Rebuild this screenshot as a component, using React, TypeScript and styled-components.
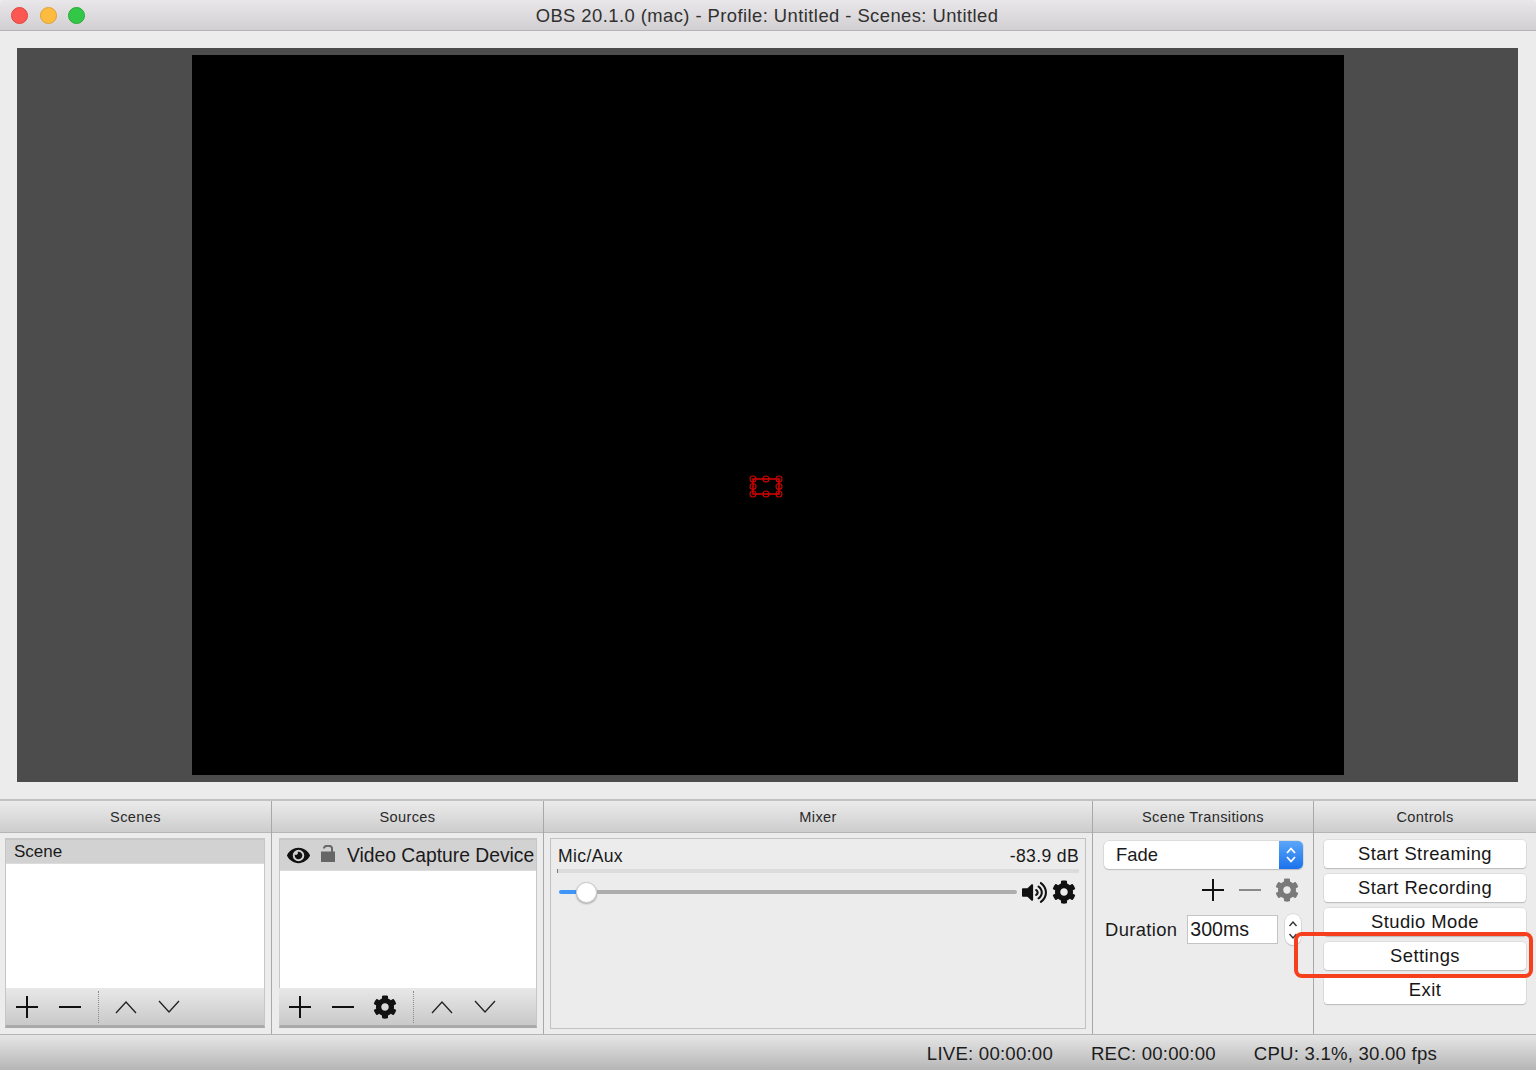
import React from 'react'
import styled, { createGlobalStyle } from 'styled-components'
import { FaCog, FaEye, FaVolumeUp } from 'react-icons/fa'

const GlobalStyle = createGlobalStyle`
  html, body {
    margin: 0;
    background: #ececec;
  }
  * {
    box-sizing: border-box;
  }
`

const Win = styled.div`
  position: relative;
  width: 1536px;
  height: 1070px;
  display: flex;
  flex-direction: column;
  overflow: hidden;
  background: #ececec;
  color: #1a1a1a;
  font-family: "Liberation Sans", Arial, sans-serif;
`

const TitleBar = styled.div`
  height: 31px;
  flex: none;
  display: flex;
  align-items: center;
  position: relative;
  padding-left: 11px;
  gap: 11.5px;
  background: linear-gradient(#e9e7e9, #d1cfd1);
  border-bottom: 1px solid #b4b4b4;
  border-radius: 5px 5px 0 0;
`

const Light = styled.span<{ $c: string; $b: string }>`
  width: 17px;
  height: 17px;
  border-radius: 50%;
  background: ${(p) => p.$c};
  border: 1px solid ${(p) => p.$b};
`

const Title = styled.div`
  position: absolute;
  left: 0;
  right: 2px;
  top: 4px;
  text-align: center;
  font-size: 18.4px;
  letter-spacing: 0.44px;
  line-height: 23px;
  color: #303030;
`

const Preview = styled.div`
  margin: 17px 18px 17px 17px;
  height: 734px;
  flex: none;
  padding: 7px 174px 7px 175px;
  background: #4c4c4c;
`

const Canvas = styled.div`
  height: 100%;
  display: flex;
  align-items: center;
  justify-content: center;
  background: #000;
`

const BoundsSvg = styled.svg`
  margin: 143px 4px 0 0;
`

const Dock = styled.div`
  flex: none;
  height: 235px;
  display: grid;
  grid-template-columns: 272px 272px 549px 221px 222px;
  border-top: 2px solid #c2c2c2;
`

const Panel = styled.section`
  display: flex;
  flex-direction: column;
  min-width: 0;
  border-right: 1px solid #a8a8a8;
  &:last-child {
    border-right: 0;
  }
`

const PanelHead = styled.div`
  height: 32px;
  flex: none;
  display: flex;
  align-items: center;
  justify-content: center;
  font-size: 14.6px;
  letter-spacing: 0.35px;
  color: #2a2a2a;
  background: linear-gradient(#ebebeb, #cdcdcd);
  border-bottom: 1px solid #b5b5b5;
`

const ListWrap = styled.div<{ $left: number }>`
  flex: 1;
  display: flex;
  padding: 5px 6px 6px ${(p) => p.$left}px;
`

const ListBox = styled.div`
  flex: 1;
  display: flex;
  flex-direction: column;
  border: 1px solid #c6c6c6;
  border-top-width: 2px;
  border-bottom-width: 3px;
  border-bottom-color: #a9a9a9;
  background: #fff;
`

const ListRow = styled.div<{ $h: number }>`
  height: ${(p) => p.$h}px;
  flex: none;
  display: flex;
  align-items: center;
  background: #d2d2d2;
  border-bottom: 1px solid #dcdcdc;
`

const SceneName = styled.span`
  padding: 1px 0 0 8px;
  font-size: 17px;
`

const SourceName = styled.span`
  margin-left: 11px;
  padding-top: 2px;
  font-size: 19.3px;
  white-space: nowrap;
`

const Eye = styled(FaEye)`
  margin-left: 7px;
  width: 23px;
  height: 23px;
  color: #111;
`

const LockIcon = styled.svg`
  margin-left: 10px;
  width: 16px;
  height: 17px;
  margin-top: -4px;
`

const Grow = styled.div`
  flex: 1;
`

const ListTools = styled.div<{ $nudge?: number }>`
  height: 37px;
  flex: none;
  display: flex;
  align-items: center;
  margin-left: ${(p) => p.$nudge ?? 0}px;
  background: linear-gradient(#e8e8e8, #c9c9c9);
`

const ToolBtn = styled.span<{ $dim?: boolean }>`
  width: 42.6px;
  height: 30px;
  flex: none;
  display: flex;
  align-items: center;
  justify-content: center;
  color: ${(p) => (p.$dim ? '#7a7a7a' : '#111')};
`

const ToolSep = styled.span`
  width: 0;
  height: 32px;
  margin: 0 6.5px;
  border-left: 1px dotted #8a8a8a;
`

const Gear = styled(FaCog)<{ $size: number }>`
  width: ${(p) => p.$size}px;
  height: ${(p) => p.$size}px;
`

const MixerBox = styled.div`
  margin: 5px 6px 5px 6px;
  flex: 1;
  padding: 6px 6px 0 6px;
  border: 1px solid #c2c2c2;
  background: #ececec;
`

const MixerTop = styled.div`
  display: flex;
  justify-content: space-between;
  font-size: 17.6px;
  letter-spacing: 0.35px;
  line-height: 22px;
  padding: 0 0 0 1px;
`

const Meter = styled.div`
  height: 4px;
  margin-top: 2px;
  background: #dcdcdc;
  border-left: 1px solid #777;
`

const SliderRow = styled.div`
  height: 30px;
  margin-top: 4px;
  display: flex;
  align-items: center;
`

const TrackFill = styled.span`
  width: 17px;
  height: 4px;
  margin-left: 2px;
  flex: none;
  border-radius: 2px 0 0 2px;
  background: #3f96f6;
`

const Thumb = styled.span`
  width: 21px;
  height: 21px;
  flex: none;
  border-radius: 50%;
  background: #fff;
  border: 1px solid #c9c9c9;
  box-shadow: 0 1px 2px rgba(0, 0, 0, 0.3);
`

const TrackRest = styled.span`
  width: 420px;
  height: 4px;
  flex: none;
  border-radius: 0 2px 2px 0;
  background: #adadad;
`

const Volume = styled(FaVolumeUp)`
  margin-left: 5px;
  width: 25px;
  height: 25px;
  color: #111;
`

const MixGear = styled(Gear)`
  margin-left: 5px;
  color: #111;
`

const TransBody = styled.div`
  display: flex;
  flex-direction: column;
  padding: 8px 10px 0 11px;
`

const Select = styled.div`
  height: 28px;
  display: flex;
  align-items: center;
  justify-content: space-between;
  border-radius: 5px;
  background: #fff;
  box-shadow: 0 0 0 0.5px #ccc, 0 1px 1px rgba(0, 0, 0, 0.25);
  font-size: 18.4px;
  padding-left: 12px;
`

const SelectArrow = styled.span`
  width: 24px;
  height: 28px;
  display: flex;
  align-items: center;
  justify-content: center;
  border-radius: 0 5px 5px 0;
  background: linear-gradient(#5aa6f8, #1a72ec);
`

const TransTools = styled.div`
  height: 37px;
  margin: 2px -2.5px 0 0;
  display: flex;
  align-items: center;
  justify-content: flex-end;
`

const TransBtn = styled(ToolBtn)`
  width: 37px;
`

const DurationRow = styled.div`
  margin-top: 6px;
  padding-left: 1px;
  display: flex;
  align-items: center;
  font-size: 18.4px;
  letter-spacing: 0.35px;
`

const DurationInput = styled.div`
  width: 91px;
  height: 29px;
  margin-left: 10px;
  display: flex;
  align-items: center;
  padding-left: 2px;
  background: #fff;
  border: 1px solid #c4c4c4;
  font-size: 19.6px;
  letter-spacing: 0;
`

const Spinner = styled.span`
  width: 16px;
  height: 31px;
  margin-left: 7px;
  display: flex;
  align-items: center;
  justify-content: center;
  border-radius: 8px;
  background: #fff;
  box-shadow: 0 0 0 0.5px #c8c8c8, 0 1px 1px rgba(0, 0, 0, 0.2);
`

const ControlsBody = styled.div`
  display: flex;
  flex-direction: column;
  gap: 6px;
  padding: 7px 10px 0 10px;
`

const Button = styled.div`
  height: 28px;
  display: flex;
  align-items: center;
  justify-content: center;
  padding-bottom: 1px;
  border-radius: 4px;
  background: #fff;
  box-shadow: 0 0 0 0.5px #d0d0d0, 0 1px 1px rgba(0, 0, 0, 0.28);
  font-size: 18.4px;
  letter-spacing: 0.42px;
  color: #161616;
`

const Highlight = styled.div`
  position: absolute;
  left: 1294px;
  top: 932px;
  width: 239px;
  height: 46px;
  border: 4px solid #f6401d;
  border-radius: 8px;
  pointer-events: none;
`

const StatusBar = styled.div`
  flex: 1;
  display: flex;
  align-items: center;
  justify-content: flex-end;
  gap: 38px;
  padding: 2px 99px 0 0;
  font-size: 18.6px;
  letter-spacing: 0.22px;
  color: #1c1c1c;
  background: linear-gradient(#e6e6e6, #b6b6b6);
  border-top: 1px solid #b4b4b4;
`

const Plus = () => (
  <svg width="24" height="24" viewBox="0 0 24 24">
    <path d="M1 12H23M12 1V23" stroke="#111" strokeWidth="2" fill="none" />
  </svg>
)

const Minus = ({ color = '#111' }: { color?: string }) => (
  <svg width="24" height="24" viewBox="0 0 24 24">
    <path d="M1 12H23" stroke={color} strokeWidth="2" fill="none" />
  </svg>
)

const Chevron = ({ up }: { up?: boolean }) => (
  <svg width="22" height="14" viewBox="0 0 22 14">
    <path d={up ? 'M1 13L11 2L21 13' : 'M1 1L11 12L21 1'} stroke="#222" strokeWidth="1.3" fill="none" />
  </svg>
)

// open padlock: the left leg of the shackle stops short of the body
const Lock = () => (
  <LockIcon viewBox="0 0 16 17">
    <path d="M4 3.6V3.4a4 2.6 0 0 1 8 0V7" stroke="#666" strokeWidth="2" fill="none" />
    <rect x="1" y="6.5" width="14" height="10.5" fill="#666" />
  </LockIcon>
)

// red bounding box of the source, with its eight handles
const SourceBox = () => (
  <BoundsSvg width="34" height="23" viewBox="0 0 34 23" fill="none" stroke="#d00000" strokeWidth="1.1">
    <rect x="4" y="4" width="26" height="15" strokeWidth="1.6" />
    {[4, 17, 30].map((x) =>
      [4, 11.5, 19]
        .filter((y) => !(x === 17 && y === 11.5))
        .map((y) => <circle key={`${x}-${y}`} cx={x} cy={y} r="3" />)
    )}
  </BoundsSvg>
)

const App: React.FC = () => {
  return (
    <Win>
      <GlobalStyle />
      <TitleBar>
        <Light $c="#fc5753" $b="#e0443e" />
        <Light $c="#fdbc40" $b="#dea034" />
        <Light $c="#33c748" $b="#27aa35" />
        <Title>OBS 20.1.0 (mac) - Profile: Untitled - Scenes: Untitled</Title>
      </TitleBar>

      <Preview>
        <Canvas>
          <SourceBox />
        </Canvas>
      </Preview>

      <Dock>
        <Panel>
          <PanelHead>Scenes</PanelHead>
          <ListWrap $left={5}>
            <ListBox>
              <ListRow $h={24}>
                <SceneName>Scene</SceneName>
              </ListRow>
              <Grow />
              <ListTools>
                <ToolBtn><Plus /></ToolBtn>
                <ToolBtn><Minus /></ToolBtn>
                <ToolSep />
                <ToolBtn><Chevron up /></ToolBtn>
                <ToolBtn><Chevron /></ToolBtn>
              </ListTools>
            </ListBox>
          </ListWrap>
        </Panel>

        <Panel>
          <PanelHead>Sources</PanelHead>
          <ListWrap $left={7}>
            <ListBox>
              <ListRow $h={31}>
                <Eye />
                <Lock />
                <SourceName>Video Capture Device</SourceName>
              </ListRow>
              <Grow />
              <ListTools $nudge={-1}>
                <ToolBtn><Plus /></ToolBtn>
                <ToolBtn><Minus /></ToolBtn>
                <ToolBtn><Gear $size={24} /></ToolBtn>
                <ToolSep />
                <ToolBtn><Chevron up /></ToolBtn>
                <ToolBtn><Chevron /></ToolBtn>
              </ListTools>
            </ListBox>
          </ListWrap>
        </Panel>

        <Panel>
          <PanelHead>Mixer</PanelHead>
          <MixerBox>
            <MixerTop>
              <span>Mic/Aux</span>
              <span>-83.9 dB</span>
            </MixerTop>
            <Meter />
            <SliderRow>
              <TrackFill />
              <Thumb />
              <TrackRest />
              <Volume />
              <MixGear $size={24} />
            </SliderRow>
          </MixerBox>
        </Panel>

        <Panel>
          <PanelHead>Scene Transitions</PanelHead>
          <TransBody>
            <Select>
              Fade
              <SelectArrow>
                <svg width="12" height="20" viewBox="0 0 12 20" fill="none" stroke="#fff" strokeWidth="1.8">
                  <path d="M2 8L6 3.5L10 8M2 12L6 16.5L10 12" />
                </svg>
              </SelectArrow>
            </Select>
            <TransTools>
              <TransBtn><Plus /></TransBtn>
              <TransBtn><Minus color="#8a8a8a" /></TransBtn>
              <TransBtn $dim><Gear $size={24} /></TransBtn>
            </TransTools>
            <DurationRow>
              Duration
              <DurationInput>300ms</DurationInput>
              <Spinner>
                <svg width="10" height="24" viewBox="0 0 10 24" fill="none" stroke="#333" strokeWidth="1.4">
                  <path d="M1.5 8L5 4L8.5 8M1.5 16L5 20L8.5 16" />
                </svg>
              </Spinner>
            </DurationRow>
          </TransBody>
        </Panel>

        <Panel>
          <PanelHead>Controls</PanelHead>
          <ControlsBody>
            <Button>Start Streaming</Button>
            <Button>Start Recording</Button>
            <Button>Studio Mode</Button>
            <Button>Settings</Button>
            <Button>Exit</Button>
          </ControlsBody>
        </Panel>
      </Dock>

      <StatusBar>
        <span>LIVE: 00:00:00</span>
        <span>REC: 00:00:00</span>
        <span>CPU: 3.1%, 30.00 fps</span>
      </StatusBar>

      <Highlight />
    </Win>
  )
}

export default App
